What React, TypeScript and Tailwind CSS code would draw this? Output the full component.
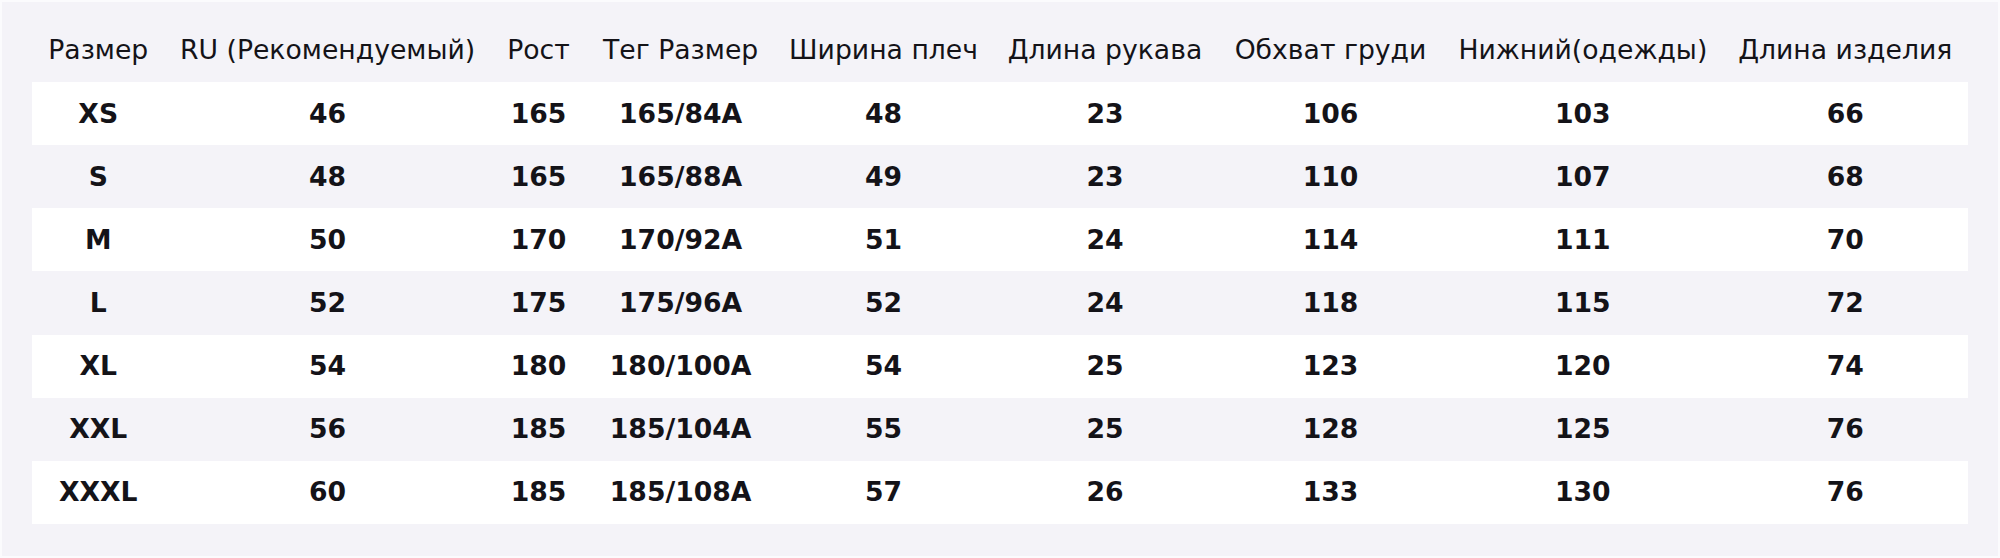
import React from "react";

const headers = [
  "Размер",
  "RU (Рекомендуемый)",
  "Рост",
  "Тег Размер",
  "Ширина плеч",
  "Длина рукава",
  "Обхват груди",
  "Нижний(одежды)",
  "Длина изделия",
];

const widths = [
  "w-[132.5px]",
  "w-[326.2px]",
  "w-[95.6px]",
  "w-[188.7px]",
  "w-[217.2px]",
  "w-[225.6px]",
  "w-[225.5px]",
  "w-[279.2px]",
  "w-[245.5px]",
];

const rows = [
  ["XS", "46", "165", "165/84A", "48", "23", "106", "103", "66"],
  ["S", "48", "165", "165/88A", "49", "23", "110", "107", "68"],
  ["M", "50", "170", "170/92A", "51", "24", "114", "111", "70"],
  ["L", "52", "175", "175/96A", "52", "24", "118", "115", "72"],
  ["XL", "54", "180", "180/100A", "54", "25", "123", "120", "74"],
  ["XXL", "56", "185", "185/104A", "55", "25", "128", "125", "76"],
  ["XXXL", "60", "185", "185/108A", "57", "26", "133", "130", "76"],
];

export default function App() {
  return (
    <div className="w-[2000px] h-[558px] border-2 border-[#fbfbfd] bg-[#f4f3f8] px-[30px] pt-[30px] pb-[30px] font-['DejaVu_Sans',sans-serif] text-[#141318]">
      <table className="table-fixed border-collapse w-[1936px]">
        <colgroup>
          {widths.map((w, i) => (
            <col key={i} className={w} />
          ))}
        </colgroup>
        <thead>
          <tr>
            {headers.map((h) => (
              <th
                key={h}
                className="p-0 pt-[4px] pb-[18px] h-[50px] align-top text-[26.67px] leading-[28px] font-normal text-center whitespace-nowrap"
              >
                {h}
              </th>
            ))}
          </tr>
        </thead>
        <tbody>
          {rows.map((r, i) => (
            <tr key={i} className={i % 2 === 0 ? "bg-white" : "bg-[#f4f3f8]"}>
              {r.map((c, j) => (
                <td
                  key={j}
                  className="p-0 h-[63.15px] align-middle text-center text-[26.67px] leading-[28px] font-bold whitespace-nowrap"
                >
                  {c}
                </td>
              ))}
            </tr>
          ))}
        </tbody>
      </table>
    </div>
  );
}
